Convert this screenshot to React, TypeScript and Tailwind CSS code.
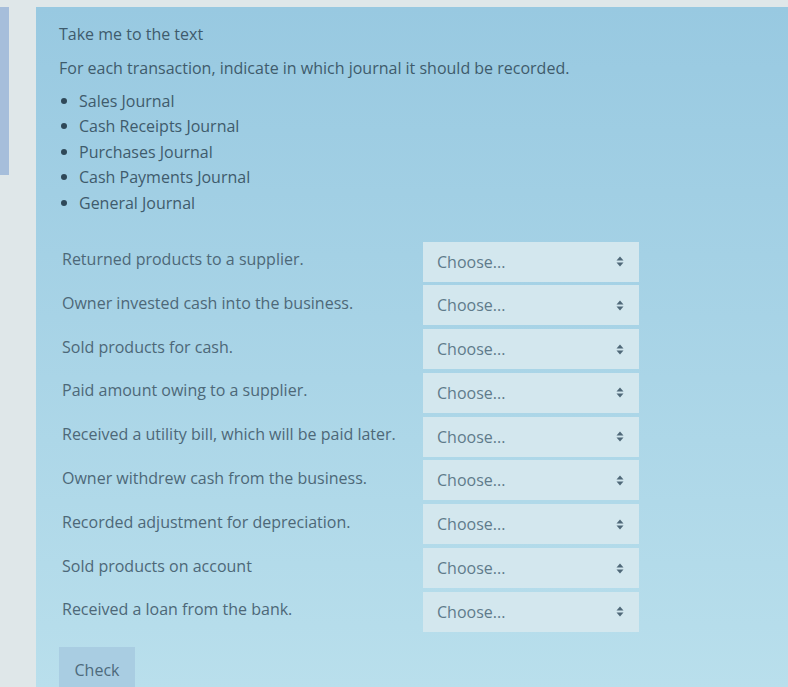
const journals = [
  'Sales Journal',
  'Cash Receipts Journal',
  'Purchases Journal',
  'Cash Payments Journal',
  'General Journal',
];

const transactions = [
  'Returned products to a supplier.',
  'Owner invested cash into the business.',
  'Sold products for cash.',
  'Paid amount owing to a supplier.',
  'Received a utility bill, which will be paid later.',
  'Owner withdrew cash from the business.',
  'Recorded adjustment for depreciation.',
  'Sold products on account',
  'Received a loan from the bank.',
];

function SortArrows() {
  return (
    <svg className="w-[8px] h-[11px] text-[#4f6878]" viewBox="0 0 8 11" fill="currentColor">
      <path d="M4 0.5L7.5 4.5H0.5z" />
      <path d="M4 10.5L7.5 6.5H0.5z" />
    </svg>
  );
}

function ChooseSelect() {
  return (
    <div className="flex h-[40px] w-[216px] items-center justify-between bg-[#d3e7ee] pl-[14px] pr-[15px]">
      <span className="text-[16px] text-[#5f7b8b]">Choose...</span>
      <SortArrows />
    </div>
  );
}

export default function App() {
  return (
    <div
      className="flex h-[687px] w-[788px] overflow-hidden bg-[#dfe7e9] pt-[7px]"
      style={{ fontFamily: '"Open Sans", "Noto Sans", sans-serif' }}
    >
      <div className="h-[168px] w-[9px] shrink-0 bg-[#a6bedb]" />
      <div className="ml-[27px] flex flex-1 flex-col bg-gradient-to-b from-[#98c9e1] to-[#b9dfec] pl-[23px] pt-[16px] text-[#3f5b6c]">
        <p className="text-[16px] leading-[22px]">Take me to the text</p>
        <p className="mt-[12px] text-[16px] leading-[22px]">
          For each transaction, indicate in which journal it should be recorded.
        </p>
        <ul className="mt-[9px] flex flex-col">
          {journals.map((j) => (
            <li key={j} className="flex h-[25.5px] items-center text-[16px]">
              <span className="ml-[2px] mr-[12px] h-[6px] w-[6px] rounded-full bg-[#2f4858]" />
              {j}
            </li>
          ))}
        </ul>

        <div className="mt-[26px] flex flex-col gap-[3.8px]">
          {transactions.map((t) => (
            <div key={t} className="flex items-center">
              <div className="w-[364px] pl-[3px] pb-[5px] text-[16px] text-[#4d6878]">{t}</div>
              <ChooseSelect />
            </div>
          ))}
        </div>

        <div className="mt-[15px]">
          <button
            type="button"
            className="h-[44px] w-[76px] bg-[#a9cde2] pt-[2px] text-[16px] text-[#4d6a7c]"
          >
            Check
          </button>
        </div>
      </div>
    </div>
  );
}
